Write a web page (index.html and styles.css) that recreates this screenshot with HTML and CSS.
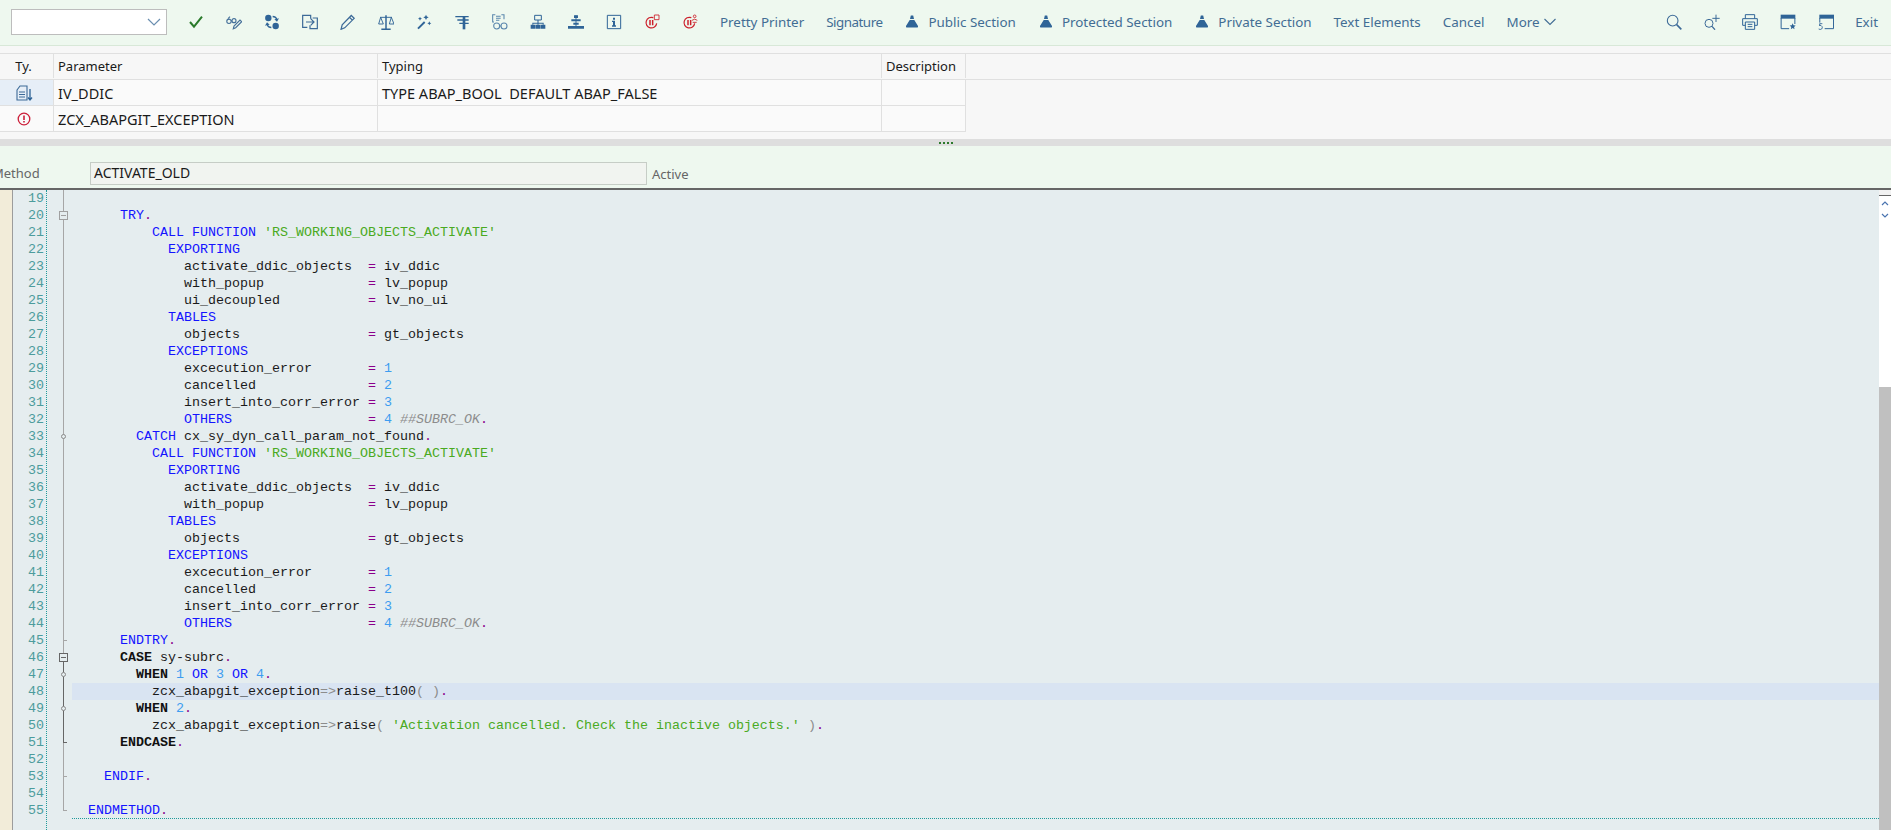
FILE: index.html
```html
<!DOCTYPE html>
<html>
<head>
  <meta charset="UTF-8">
  <title>Class Builder - ACTIVATE_OLD</title>
  <link rel="stylesheet" href="styles.css">
</head>
<body>
  <!-- Application toolbar -->
  <div class="toolbar">
    <div class="combo"><svg class="combo-arrow" width="16" height="10" viewBox="0 0 16 10"><path d="M2 2l6 6 6-6" fill="none" stroke="#6b8fb0" stroke-width="1.2"/></svg></div>
    <div class="icon-group">
      <span class="tool-icon"><svg viewBox="0 0 24 24"><path d="M3 12l6 7L21 4" fill="none" stroke="#2a7a2a" stroke-width="3"/></svg></span>
      <span class="tool-icon"><svg viewBox="0 0 24 24" fill="none" stroke="#45709a" stroke-width="1.700"><circle cx="4.500" cy="11" r="3.300"/><circle cx="12" cy="10" r="3"/><path d="M7.800 10.500q.8-1 1.200-.8M3 7l3-3M11 22l1-4 9-9 2.500 2.500-9 9z"/></svg></span>
      <span class="tool-icon"><svg viewBox="0 0 24 24" fill="#2f6497"><circle cx="6.500" cy="6" r="4.800"/><circle cx="17.500" cy="18" r="4.800"/><path d="M13 2.500q5 0 7 4.500l2.500-.5-3 5-4-3.500 2.500-.5q-1.500-2.500-5-2.500zM11 21.500q-5 0-7-4.500l-2.500.5 3-5 4 3.500-2.500.5q1.500 2.500 5 2.500z"/></svg></span>
      <span class="tool-icon"><svg viewBox="0 0 24 24" fill="none" stroke="#3c6a98" stroke-width="1.800"><path d="M13 7V2H1v18h7M12 17v5h11V6h-7"/><path d="M6 12h12M13 7l5 5-5 5"/></svg></span>
      <span class="tool-icon"><svg viewBox="2 1 21 22" fill="none" stroke="#3c6a98" stroke-width="1.700"><path d="M3 22l1.500-6L17 3l4 4L8 20zM14.500 5.500l4 4"/></svg></span>
      <span class="tool-icon"><svg viewBox="0 0 24 24" fill="none" stroke="#2f6497" stroke-width="1.400"><path d="M12 2v20M5 23h14" stroke-width="2.200"/><path d="M3 5h18M4 5l-3 10h7zM20 5l-3 10h7z"/></svg></span>
      <span class="tool-icon"><svg viewBox="0 0 24 24" fill="#2f6497"><path d="M2 21l10-10 2 2L4 23z"/><path d="M15 1l1.300 2.700L19 5l-2.700 1.300L15 9l-1.300-2.700L11 5l2.700-1.300zM6 4l1 2 2 1-2 1-1 2-1-2-2-1 2-1zM20 11l1 2 2 1-2 1-1 2-1-2-2-1 2-1z"/></svg></span>
      <span class="tool-icon"><svg viewBox="0 0 24 24" fill="#2f6497"><path d="M2 3h20v2H2zM5 8h17v2H5zM8 13h14v2H8z"/><path d="M13 3h4v20h-4z"/></svg></span>
      <span class="tool-icon"><svg viewBox="0 0 24 24" fill="none" stroke="#5b87ad" stroke-width="1.600"><path d="M5 1H1v11h2M14 1h4v7M6 3.500h7M6 6.500h7M6 9.500h5"/><circle cx="7" cy="18" r="4.500"/><circle cx="18" cy="18" r="4.500"/><path d="M11.500 18h2"/></svg></span>
      <span class="tool-icon"><svg viewBox="0 0 24 24" fill="#2f6497"><path d="M7 2h10v7H7z" fill="none" stroke="#2f6497" stroke-width="1.500"/><path d="M11.200 9h1.600v4h7.700v3H19v-1.500h-6.200V16h-1.600v-1.500H5V16H3.500v-3h7.700z"/><path d="M1 16h7v6H1zM8.500 16h7v6h-7zM16 16h7v6h-7z"/></svg></span>
      <span class="tool-icon"><svg viewBox="0 0 24 24" fill="#2f6497"><path d="M9 2h6v4H9zM5 8h14v3H5zM8 13h8v3H8zM0 18h24v4H0z"/><path d="M11.300 2h1.400v17h-1.400z"/></svg></span>
      <span class="tool-icon"><svg viewBox="0 0 24 24"><path d="M2 2h20v20H2z" fill="none" stroke="#2f6497" stroke-width="1.500"/><path d="M10.500 5.500h3v3h-3zM9 10h4.500v7H15v2H9v-2h1.500v-5H9z" fill="#2f6497"/></svg></span>
      <span class="tool-icon"><svg viewBox="0 0 24 24" fill="none" stroke="#cc1f2a"><path d="M14 5.500A8 8 0 1 0 19 14" stroke-width="1.800"/><path d="M9 9v8M13 9v8" stroke-width="2.200"/><path d="M15.500 1.500h7v7h-7z" stroke-width="1.300"/></svg></span>
      <span class="tool-icon"><svg viewBox="0 0 24 24" fill="none" stroke="#cc1f2a"><path d="M14 5.500A8 8 0 1 0 19 14" stroke-width="1.800"/><path d="M9 9v8M13 9v8" stroke-width="2.200"/><circle cx="19" cy="3.500" r="2" stroke-width="1.300"/><path d="M15 9.500q4-3.500 8 0M16 12.500h6" stroke-width="1.300"/></svg></span>
    </div>
    <a class="tool-text">Pretty Printer</a>
    <a class="tool-text tight">Signature</a>
    <a class="tool-text with-icon"><svg width="16" height="16" viewBox="0 0 16 16" fill="#2f6497"><path d="M6.800 1.500h2.400L10 5H6zM5.700 6h4.600L14 12q.5 1.500-1 1.500H3Q1.500 13.500 2 12z"/></svg>Public Section</a>
    <a class="tool-text with-icon"><svg width="16" height="16" viewBox="0 0 16 16" fill="#2f6497"><path d="M6.800 1.500h2.400L10 5H6zM5.700 6h4.600L14 12q.5 1.500-1 1.500H3Q1.500 13.500 2 12z"/></svg>Protected Section</a>
    <a class="tool-text with-icon"><svg width="16" height="16" viewBox="0 0 16 16" fill="#2f6497"><path d="M6.800 1.500h2.400L10 5H6zM5.700 6h4.600L14 12q.5 1.500-1 1.500H3Q1.500 13.500 2 12z"/></svg>Private Section</a>
    <a class="tool-text">Text Elements</a>
    <a class="tool-text">Cancel</a>
    <a class="tool-text more">More<svg width="14" height="10" viewBox="0 0 14 10"><path d="M1.500 2l5.500 5.500L12.500 2" fill="none" stroke="#426d94" stroke-width="1.100"/></svg></a>
    <div class="icon-group right">
      <span class="tool-icon"><svg viewBox="0 0 24 24" fill="none" stroke="#3c6a98" stroke-width="1.600"><circle cx="10" cy="10" r="8"/><path d="M16 16l7 7" stroke-width="2.400"/></svg></span>
      <span class="tool-icon"><svg viewBox="0 0 24 24" fill="none" stroke="#3c6a98" stroke-width="1.500"><circle cx="7.500" cy="14" r="6"/><path d="M12 18.500l4.500 5" stroke-width="2"/><path d="M18 1v11M12.500 6.500h11"/></svg></span>
      <span class="tool-icon"><svg viewBox="0 0 24 24" fill="none" stroke="#2f6497" stroke-width="1.500"><path d="M5 7V1h14v6M5 17H1V7h22v10h-4"/><path d="M5 12h14v11H5zM8.500 15.500h7M8.500 19h7"/></svg></span>
      <span class="tool-icon"><svg viewBox="0 0 24 24"><path d="M1 1h22v6H1z" fill="#2f6497"/><path d="M1.700 6v16h12M22.300 6v9" fill="none" stroke="#2f6497" stroke-width="1.500"/><path d="M19 14l1.300 3 3.200.3-2.400 2.200.7 3.300-2.800-1.700-2.800 1.700.7-3.300-2.400-2.200 3.200-.3z" fill="#2f6497"/></svg></span>
      <span class="tool-icon"><svg viewBox="0 0 24 24"><path d="M2 1h22v6H2z" fill="#2f6497"/><path d="M23.300 6v16H10M2.700 6v7" fill="none" stroke="#2f6497" stroke-width="1.500"/><path d="M1 22.500q2.500 1.500 4.500 0 1.500-1.500.7-3.500-1.300-2.500-4-2M6.500 14.500H2.500v3.500" fill="none" stroke="#2f6497" stroke-width="1.300"/></svg></span>
    </div>
    <a class="tool-text exit">Exit</a>
  </div>

  <!-- Parameter table -->
  <div class="params">
    <div class="param-row param-head">
      <div class="cell col-type">Ty.</div>
      <div class="cell col-name">Parameter</div>
      <div class="cell col-typing">Typing</div>
      <div class="cell col-desc">Description</div>
    </div>
    <div class="param-row">
      <div class="cell col-type selected"><svg width="18" height="18" viewBox="0 0 18 18" fill="none" stroke="#3c6a98" stroke-width="1.100"><path d="M2 6l3-4h7v14H2zM4 8h6M4 10.500h6M4 13h6"/><path d="M15 5v11M13 13.500l2 2.500 2-2.500" stroke="#2f6497" stroke-width="1.300"/></svg></div>
      <div class="cell col-name">IV_DDIC</div>
      <div class="cell col-typing">TYPE ABAP_BOOL &nbsp;DEFAULT ABAP_FALSE</div>
      <div class="cell col-desc"></div>
    </div>
    <div class="param-row">
      <div class="cell col-type"><svg width="16" height="16" viewBox="0 0 16 16"><circle cx="8" cy="8" r="5.800" fill="none" stroke="#cc1f3a" stroke-width="1.300"/><path d="M7.200 4.500h1.600v4.500H7.200zM7.200 10h1.600v1.600H7.200z" fill="#cc1f3a"/></svg></div>
      <div class="cell col-name">ZCX_ABAPGIT_EXCEPTION</div>
      <div class="cell col-typing"></div>
      <div class="cell col-desc"></div>
    </div>
  </div>

  <div class="splitter"><span></span><span></span><span></span><span></span></div>

  <div class="method-bar">
    <label class="method-label">Method</label>
    <div class="method-input">ACTIVATE_OLD</div>
    <span class="method-status">Active</span>
  </div>

  <!-- ABAP editor -->
  <div class="editor">
    <div class="margin"></div>
    <div class="numbers">
      <div>19</div><div>20</div><div>21</div><div>22</div><div>23</div><div>24</div><div>25</div><div>26</div><div>27</div><div>28</div><div>29</div><div>30</div><div>31</div><div>32</div><div>33</div><div>34</div><div>35</div><div>36</div><div>37</div><div>38</div><div>39</div><div>40</div><div>41</div><div>42</div><div>43</div><div>44</div><div>45</div><div>46</div><div>47</div><div>48</div><div>49</div><div>50</div><div>51</div><div>52</div><div>53</div><div>54</div><div>55</div>
    </div>
    <div class="folds">
      <div class="fold"></div>
      <div class="fold box"></div>
      <div class="fold"></div><div class="fold"></div><div class="fold"></div><div class="fold"></div><div class="fold"></div><div class="fold"></div><div class="fold"></div><div class="fold"></div><div class="fold"></div><div class="fold"></div><div class="fold"></div><div class="fold"></div>
      <div class="fold dot"></div>
      <div class="fold"></div><div class="fold"></div><div class="fold"></div><div class="fold"></div><div class="fold"></div><div class="fold"></div><div class="fold"></div><div class="fold"></div><div class="fold"></div><div class="fold"></div><div class="fold"></div>
      <div class="fold tick"></div>
      <div class="fold box dark enter"></div>
      <div class="fold dot dark"></div>
      <div class="fold dark"></div>
      <div class="fold dot dark"></div>
      <div class="fold dark"></div>
      <div class="fold tick dark leave"></div>
      <div class="fold"></div>
      <div class="fold tick"></div>
      <div class="fold"></div>
      <div class="fold tick to-mid"></div>
    </div>
    <div class="code">
      <div class="line"></div>
      <div class="line">      <b class="k">TRY</b><i class="p">.</i></div>
      <div class="line">          <b class="k">CALL FUNCTION</b> <span class="s">'RS_WORKING_OBJECTS_ACTIVATE'</span></div>
      <div class="line">            <b class="k">EXPORTING</b></div>
      <div class="line">              activate_ddic_objects  <i class="p">=</i> iv_ddic</div>
      <div class="line">              with_popup             <i class="p">=</i> lv_popup</div>
      <div class="line">              ui_decoupled           <i class="p">=</i> lv_no_ui</div>
      <div class="line">            <b class="k">TABLES</b></div>
      <div class="line">              objects                <i class="p">=</i> gt_objects</div>
      <div class="line">            <b class="k">EXCEPTIONS</b></div>
      <div class="line">              excecution_error       <i class="p">=</i> <span class="n">1</span></div>
      <div class="line">              cancelled              <i class="p">=</i> <span class="n">2</span></div>
      <div class="line">              insert_into_corr_error <i class="p">=</i> <span class="n">3</span></div>
      <div class="line">              <b class="k">OTHERS</b>                 <i class="p">=</i> <span class="n">4</span> <span class="c">##SUBRC_OK</span><i class="p">.</i></div>
      <div class="line">        <b class="k">CATCH</b> cx_sy_dyn_call_param_not_found<i class="p">.</i></div>
      <div class="line">          <b class="k">CALL FUNCTION</b> <span class="s">'RS_WORKING_OBJECTS_ACTIVATE'</span></div>
      <div class="line">            <b class="k">EXPORTING</b></div>
      <div class="line">              activate_ddic_objects  <i class="p">=</i> iv_ddic</div>
      <div class="line">              with_popup             <i class="p">=</i> lv_popup</div>
      <div class="line">            <b class="k">TABLES</b></div>
      <div class="line">              objects                <i class="p">=</i> gt_objects</div>
      <div class="line">            <b class="k">EXCEPTIONS</b></div>
      <div class="line">              excecution_error       <i class="p">=</i> <span class="n">1</span></div>
      <div class="line">              cancelled              <i class="p">=</i> <span class="n">2</span></div>
      <div class="line">              insert_into_corr_error <i class="p">=</i> <span class="n">3</span></div>
      <div class="line">              <b class="k">OTHERS</b>                 <i class="p">=</i> <span class="n">4</span> <span class="c">##SUBRC_OK</span><i class="p">.</i></div>
      <div class="line">      <b class="k">ENDTRY</b><i class="p">.</i></div>
      <div class="line">      <b class="kb">CASE</b> sy-subrc<i class="p">.</i></div>
      <div class="line">        <b class="kb">WHEN</b> <span class="n">1</span> <b class="k">OR</b> <span class="n">3</span> <b class="k">OR</b> <span class="n">4</span><i class="p">.</i></div>
      <div class="line current">          zcx_abapgit_exception<span class="g">=&gt;</span>raise_t100<span class="g">( )</span><i class="p">.</i></div>
      <div class="line">        <b class="kb">WHEN</b> <span class="n">2</span><i class="p">.</i></div>
      <div class="line">          zcx_abapgit_exception<span class="g">=&gt;</span>raise<span class="g">(</span> <span class="s">'Activation cancelled. Check the inactive objects.'</span> <span class="g">)</span><i class="p">.</i></div>
      <div class="line">      <b class="kb">ENDCASE</b><i class="p">.</i></div>
      <div class="line"></div>
      <div class="line">    <b class="k">ENDIF</b><i class="p">.</i></div>
      <div class="line"></div>
      <div class="line last">  <b class="k">ENDMETHOD</b><i class="p">.</i></div>
    </div>
    <div class="scrollbar">
      <div class="scroll-cap"></div>
      <div class="scroll-track">
        <svg width="10" height="22" viewBox="0 0 10 22" fill="none" stroke="#4a74b0" stroke-width="1.200"><path d="M2 6l3-3 3 3M2 15l3 3 3-3"/></svg>
      </div>
      <div class="scroll-thumb"></div>
    </div>
  </div>
</body>
</html>
```

FILE: styles.css
```css
/* Global Styles */
html, body {
  margin: 0;
  padding: 0;
  height: 100%;
  overflow: hidden;
}
body {
  font-family: "Noto Sans", "Open Sans", Arial, sans-serif;
  font-size: 13px;
  background-color: #f7f7f7;
  color: #1a1a1a;
  display: flex;
  flex-direction: column;
}
svg {
  display: block;
  flex: none;
}

/* Toolbar */
.toolbar {
  display: flex;
  align-items: center;
  flex: none;
  box-sizing: border-box;
  height: 46px;
  padding: 0 13px 1px 11px;
  background-color: #eef8ef;
  border-bottom: 1px solid #d8e8d8;
  font-size: 13.4px;
}
.combo {
  box-sizing: border-box;
  width: 156px;
  height: 26px;
  background: #fff;
  border: 1px solid #bdbdbd;
  display: flex;
  align-items: center;
  justify-content: flex-end;
  padding-right: 4px;
}
.icon-group {
  display: flex;
  margin-left: 10px;
}
.icon-group.right {
  margin-left: auto;
}
.tool-icon {
  width: 38px;
  display: flex;
  justify-content: center;
}
.tool-icon svg {
  width: 16px;
  height: 16px;
}
.tool-text {
  display: flex;
  align-items: center;
  padding: 0 11px;
  color: #426d94;
  white-space: nowrap;
}
.tight {
  letter-spacing: -0.5px;
}
.with-icon svg {
  margin-right: 8px;
}
.more svg {
  margin-left: 3px;
}
.exit {
  padding: 0 0 0 10px;
}

/* Parameter table */
.params {
  flex: none;
  height: 93px;
  padding-top: 7px;
  box-sizing: border-box;
}
.param-row {
  display: flex;
  width: 966px;
  height: 26px;
  box-sizing: border-box;
  background: #fafafa;
  border-bottom: 1px solid #e0e0e0;
  font-size: 14.5px;
}
.param-head {
  width: 100%;
  height: 27px;
  padding-bottom: 1px;
  background: #f7f7f7;
  border-top: 1px solid #e0e0e0;
  font-size: 13px;
}
.cell {
  box-sizing: border-box;
  display: flex;
  align-items: center;
  padding-left: 4px;
  border-right: 1px solid #e0e0e0;
  white-space: nowrap;
  overflow: hidden;
}
.col-type {
  width: 54px;
  justify-content: center;
  padding: 0 6px 0 0;
}
.selected {
  background: #e6eef7;
}
.col-name {
  width: 324px;
}
.col-typing {
  width: 504px;
}
.col-desc {
  width: 84px;
}

.splitter {
  flex: none;
  height: 7px;
  background: #dedede;
  display: flex;
  justify-content: center;
  align-items: center;
  gap: 2px;
}
.splitter span {
  width: 2px;
  height: 2px;
  background: #2c7a2c;
}

/* Method bar */
.method-bar {
  flex: none;
  height: 42px;
  box-sizing: border-box;
  background: #eef8ef;
  display: flex;
  align-items: flex-end;
  padding-bottom: 3px;
  overflow: hidden;
}
.method-label {
  width: 98px;
  margin-left: -8px;
  padding-bottom: 1px;
  color: #666;
  line-height: 22px;
}
.method-input {
  box-sizing: border-box;
  width: 557px;
  height: 23px;
  padding-left: 3px;
  font-size: 14px;
  line-height: 19px;
  background: #f1f4f0;
  border: 1px solid #c6cdc6;
}
.method-status {
  margin-left: 5px;
  color: #666;
  line-height: 22px;
}

/* ABAP editor */
.editor {
  flex: 1;
  display: flex;
  background: #e5edef;
  border-top: 2px solid #666;
  font-family: "Liberation Mono", "Courier New", monospace;
  font-size: 13.333px;
  min-height: 0;
}
.margin {
  flex: none;
  width: 12px;
  background: #f2ecd9;
  border-right: 1px solid #9c9c9c;
}
.numbers {
  flex: none;
  width: 31px;
  padding-right: 2px;
  text-align: right;
  color: #4c9c9c;
  border-right: 1px dotted #1f9a9a;
}
.numbers div,
.line {
  height: 17px;
  line-height: 17px;
}
.folds {
  flex: none;
  width: 25px;
}
.fold {
  height: 17px;
  position: relative;
}
.fold::before {
  content: "";
  position: absolute;
  left: 16px;
  top: 0;
  bottom: 0;
  width: 1px;
  background: #a6a6a6;
}
.fold.dark::before {
  background: #666;
}
.fold.leave::before {
  background: linear-gradient(#666 50%, #a6a6a6 50%);
}
.fold.enter::before {
  background: linear-gradient(#a6a6a6 50%, #666 50%);
}
.fold.to-mid::before {
  bottom: 8px;
}
.box::after {
  content: "";
  position: absolute;
  left: 12px;
  top: 4px;
  width: 7px;
  height: 7px;
  border: 1px solid #a0a0a0;
  background: linear-gradient(#a0a0a0, #a0a0a0) center / 5px 1px no-repeat #e5edef;
}
.box.dark::after {
  border-color: #666;
  background: linear-gradient(#666, #666) center / 5px 1px no-repeat #e5edef;
}
.tick::after {
  content: "";
  position: absolute;
  left: 16px;
  top: 8px;
  width: 4px;
  height: 1px;
  background: #a6a6a6;
}
.tick.dark::after {
  background: #666;
}
.dot::after {
  content: "";
  position: absolute;
  left: 14px;
  top: 6px;
  width: 3px;
  height: 3px;
  border: 1px solid #8a8a8a;
  border-radius: 50%;
  background: #e5edef;
}
.code {
  flex: 1;
  min-width: 0;
  color: #1a1a1a;
}
.line {
  white-space: pre;
  box-sizing: border-box;
}
.current {
  background: #d9e4f2;
}
.last {
  border-bottom: 1px dotted #1f9a9a;
}
.k {
  font-weight: normal;
  color: #1414ff;
}
.kb {
  font-weight: bold;
  color: #111;
}
.p {
  font-style: normal;
  color: #8a008a;
}
.s {
  color: #4aaa22;
}
.n {
  color: #3d9df0;
}
.c {
  font-style: italic;
  color: #8c8c8c;
}
.g {
  color: #8c8c8c;
}

/* Scrollbar */
.scrollbar {
  flex: none;
  width: 12px;
  display: flex;
  flex-direction: column;
}
.scroll-cap {
  height: 6px;
  box-sizing: border-box;
  background: #f2f2f2;
  border-bottom: 1px solid #666;
}
.scroll-track {
  height: 191px;
  background: #fff;
  padding: 3px 0 0 1px;
  box-sizing: border-box;
}
.scroll-thumb {
  flex: 1;
  background: #c0c0c0;
}
```
